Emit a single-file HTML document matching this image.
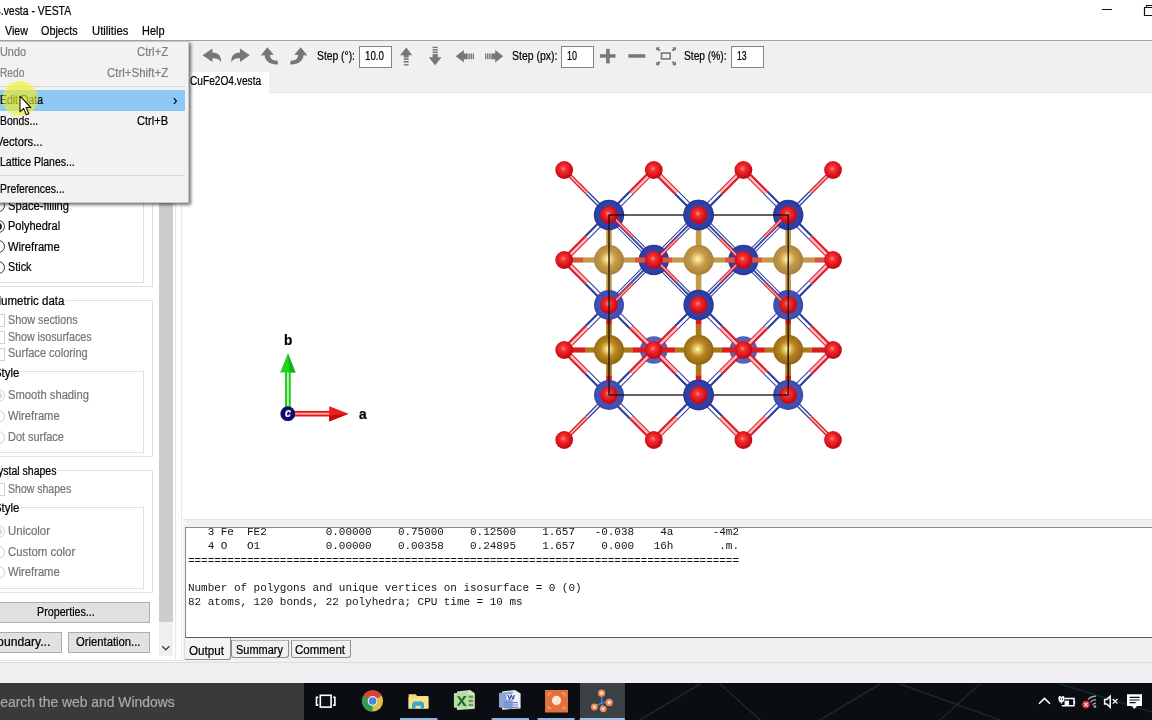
<!DOCTYPE html>
<html lang="en"><head><meta charset="utf-8"><title>CuFe2O4.vesta - VESTA</title>
<style>
html,body{margin:0;padding:0;}
body{width:1152px;height:720px;overflow:hidden;position:relative;background:#fff;font-family:"Liberation Sans",sans-serif;font-size:12px;color:#000;}
.a{position:absolute;}
.t{position:absolute;white-space:pre;line-height:1;transform-origin:0 0;-webkit-text-stroke:0.22px currentColor;}
.m{position:absolute;white-space:pre;font-family:"Liberation Mono",monospace;font-size:11px;line-height:1;color:#141414;will-change:transform;}
svg{position:absolute;overflow:visible;}
</style></head><body>
<!-- title + menu bar are white; toolbar strip -->
<div class="a" style="left:0;top:40px;width:1152px;height:1px;background:#a5a5a5;"></div>
<div class="a" style="left:0;top:41px;width:1152px;height:51.5px;background:#f0eff1;"></div>
<div class="a" style="left:0;top:92px;width:1152px;height:1px;background:#e4e4e6;"></div>
<!-- window controls -->
<div class="a" style="left:1102px;top:9px;width:10px;height:1.3px;background:#111;"></div>
<svg style="left:1142px;top:3px" width="12" height="14" viewBox="0 0 12 14"><path d="M2.5 4.5h9v8h-9z M4.5 4.5v-2h8" fill="none" stroke="#111" stroke-width="1.2"/></svg>
<!-- document tab -->
<div class="a" style="left:186px;top:72px;width:83px;height:21px;background:#fff;"></div>
<!-- toolbar inputs -->
<div class="a" style="left:359px;top:46px;width:31px;height:19.5px;background:#fff;border:1px solid #848484;"></div>
<div class="a" style="left:560.5px;top:46px;width:31px;height:19.5px;background:#fff;border:1px solid #848484;"></div>
<div class="a" style="left:730.5px;top:46px;width:31px;height:19.5px;background:#fff;border:1px solid #848484;"></div>
<!-- toolbar icons -->
<svg style="left:0;top:0" width="1152" height="100" viewBox="0 0 1152 100" fill="#777">
 <!-- rotate back/forward (reply style arrows) -->
 <path d="M202.6 55.3 L212.4 48.6 L212.4 52.6 C218.5 52.6 221.4 56.2 221 62.2 C219.6 59.2 217 58 212.4 58.2 L212.4 62 Z"/>
 <path d="M249.8 55.3 L240 48.6 L240 52.6 C233.9 52.6 231 56.2 231.4 62.2 C232.8 59.2 235.4 58 240 58.2 L240 62 Z"/>
 <!-- up-left curved, up-right curved -->
 <path d="M267.3 47.3 L260.7 55.4 L264.6 55.2 C265 60.6 269 64.6 278.3 64.4 L277.2 60.6 C272.6 60.8 270.2 58.6 270 55 L273.8 54.8 Z"/>
 <path d="M300.8 47.3 L307.4 55.4 L303.5 55.2 C303.1 60.6 299.1 64.6 289.8 64.4 L290.9 60.6 C295.5 60.8 297.9 58.6 298.1 55 L294.3 54.8 Z"/>
 <!-- up arrow with bars -->
 <path d="M406.2 47.6 L412.3 55.2 L408.6 55.2 L408.6 57.4 L403.8 57.4 L403.8 55.2 L400.1 55.2 Z"/>
 <rect x="403.8" y="58.3" width="4.8" height="1.6"/><rect x="403.8" y="61" width="4.8" height="1.6"/><rect x="403.8" y="64.1" width="4.8" height="1.4"/>
 <!-- down arrow with bars -->
 <path d="M435.1 65.2 L441.5 57.2 L437.8 57.2 L437.8 53.9 L432.6 53.9 L432.6 57.2 L428.8 57.2 Z"/>
 <rect x="432.6" y="51.6" width="5.2" height="1.5"/><rect x="432.6" y="49.1" width="5.2" height="1.5"/><rect x="432.6" y="46.7" width="5.2" height="1.4"/>
 <!-- left arrow with bars -->
 <path d="M455.8 56.2 L463.8 49.9 L463.8 53.5 L467.7 53.5 L467.7 59.2 L463.8 59.2 L463.8 62.5 Z"/>
 <rect x="468.5" y="53.5" width="1.4" height="5.7"/><rect x="470.6" y="53.5" width="1.4" height="5.7"/><rect x="472.7" y="53.5" width="1.3" height="5.7"/>
 <!-- right arrow with bars -->
 <path d="M503.2 56.2 L495.2 49.9 L495.2 53.5 L491.3 53.5 L491.3 59.2 L495.2 59.2 L495.2 62.5 Z"/>
 <rect x="489.1" y="53.5" width="1.4" height="5.7"/><rect x="487" y="53.5" width="1.4" height="5.7"/><rect x="485" y="53.5" width="1.3" height="5.7"/>
 <!-- plus / minus -->
 <rect x="600" y="54.2" width="15.5" height="3.5"/><rect x="606.1" y="48.8" width="3.6" height="14.6"/>
 <rect x="628.3" y="54.2" width="17" height="3.5"/>
 <!-- fit to window -->
 <g fill="none" stroke="#777" stroke-width="1.6">
  <rect x="661.5" y="53.1" width="8.6" height="5.8"/>
  <path d="M657.4 48.4l2.4 2.3M674.8 48.4l-2.4 2.3M657.4 64l2.4 -2.3M674.8 64l-2.4 -2.3" stroke-width="2"/>
 </g>
 <path d="M656.2 47.2h3.8l-3.8 3.6zM676 47.2h-3.8l3.8 3.6zM656.2 65.2h3.8l-3.8-3.6zM676 65.2h-3.8l3.8-3.6z"/>
</svg>
<!-- window chrome text -->
<span class="t" id="t0" style="left:-4.60px;top:4.64px;font-size:12px;color:#000;transform:scaleX(0.8666);">4.vesta - VESTA</span>
<span class="t" id="t1" style="left:4.90px;top:24.54px;font-size:12px;color:#000;transform:scaleX(0.8877);">View</span>
<span class="t" id="t2" style="left:41.30px;top:24.54px;font-size:12px;color:#000;transform:scaleX(0.9020);">Objects</span>
<span class="t" id="t3" style="left:91.70px;top:24.54px;font-size:12px;color:#000;transform:scaleX(0.9387);">Utilities</span>
<span class="t" id="t4" style="left:141.50px;top:24.54px;font-size:12px;color:#000;transform:scaleX(0.9114);">Help</span>
<span class="t" id="t5" style="left:316.80px;top:49.84px;font-size:12px;color:#000;transform:scaleX(0.8606);">Step (°):</span>
<span class="t" id="t6" style="left:365.00px;top:49.84px;font-size:12px;color:#000;transform:scaleX(0.8134);">10.0</span>
<span class="t" id="t7" style="left:511.80px;top:49.84px;font-size:12px;color:#000;transform:scaleX(0.8745);">Step (px):</span>
<span class="t" id="t8" style="left:567.00px;top:49.84px;font-size:12px;color:#000;transform:scaleX(0.7485);">10</span>
<span class="t" id="t9" style="left:684.40px;top:49.84px;font-size:12px;color:#000;transform:scaleX(0.8497);">Step (%):</span>
<span class="t" id="t10" style="left:737.30px;top:49.84px;font-size:12px;color:#000;transform:scaleX(0.7261);">13</span>
<span class="t" id="t11" style="left:189.90px;top:75.44px;font-size:12px;color:#000;transform:scaleX(0.8460);">CuFe2O4.vesta</span>
<!-- left side panel (white) with group boxes -->
<div class="a" style="left:0;top:93px;width:183px;height:568px;background:#fff;"></div>
<!-- style group (top, partially hidden) -->
<div class="a" style="left:-10px;top:150px;width:163px;height:136.5px;border:1px solid #e1e1e1;box-sizing:border-box;"></div>
<div class="a" style="left:-10px;top:160px;width:154px;height:122.5px;border:1px solid #e1e1e1;box-sizing:border-box;"></div>
<!-- volumetric data -->
<div class="a" style="left:-10px;top:300px;width:163px;height:157px;border:1px solid #e1e1e1;box-sizing:border-box;"></div>
<div class="a" style="left:-10px;top:371px;width:154px;height:81.5px;border:1px solid #e1e1e1;box-sizing:border-box;"></div>
<!-- crystal shapes -->
<div class="a" style="left:-10px;top:470px;width:163px;height:123px;border:1px solid #e1e1e1;box-sizing:border-box;"></div>
<div class="a" style="left:-10px;top:507px;width:154px;height:81.5px;border:1px solid #e1e1e1;box-sizing:border-box;"></div>
<!-- radio buttons -->
<div class="a" style="left:-8px;top:199px;width:11px;height:11px;border:1px solid #333;border-radius:50%;"></div>
<div class="a" style="left:-8px;top:219.5px;width:11px;height:11px;border:1px solid #333;border-radius:50%;"></div>
<div class="a" style="left:-5px;top:222.5px;width:7px;height:7px;background:#222;border-radius:50%;"></div>
<div class="a" style="left:-8px;top:240px;width:11px;height:11px;border:1px solid #333;border-radius:50%;"></div>
<div class="a" style="left:-8px;top:260.5px;width:11px;height:11px;border:1px solid #333;border-radius:50%;"></div>
<!-- disabled checkboxes -->
<div class="a" style="left:-8.5px;top:313.5px;width:11px;height:11px;border:1px solid #cfcfcf;"></div>
<div class="a" style="left:-8.5px;top:330.5px;width:11px;height:11px;border:1px solid #cfcfcf;"></div>
<div class="a" style="left:-8.5px;top:347.5px;width:11px;height:11px;border:1px solid #cfcfcf;"></div>
<div class="a" style="left:-8.5px;top:483px;width:11px;height:11px;border:1px solid #cfcfcf;"></div>
<!-- disabled radios -->
<div class="a" style="left:-8px;top:389px;width:11px;height:11px;border:1px solid #cfcfcf;border-radius:50%;"></div>
<div class="a" style="left:-5px;top:392px;width:7px;height:7px;background:#d4d4d4;border-radius:50%;"></div>
<div class="a" style="left:-8px;top:410px;width:11px;height:11px;border:1px solid #cfcfcf;border-radius:50%;"></div>
<div class="a" style="left:-8px;top:430.5px;width:11px;height:11px;border:1px solid #cfcfcf;border-radius:50%;"></div>
<div class="a" style="left:-8px;top:525px;width:11px;height:11px;border:1px solid #cfcfcf;border-radius:50%;"></div>
<div class="a" style="left:-5px;top:528px;width:7px;height:7px;background:#d4d4d4;border-radius:50%;"></div>
<div class="a" style="left:-8px;top:546px;width:11px;height:11px;border:1px solid #cfcfcf;border-radius:50%;"></div>
<div class="a" style="left:-8px;top:566px;width:11px;height:11px;border:1px solid #cfcfcf;border-radius:50%;"></div>
<!-- buttons -->
<div class="a" style="left:-10px;top:601.5px;width:159.5px;height:21px;background:#e1e1e1;border:1px solid #adadad;box-sizing:border-box;"></div>
<div class="a" style="left:-10px;top:631.5px;width:72px;height:21.5px;background:#e1e1e1;border:1px solid #adadad;box-sizing:border-box;"></div>
<div class="a" style="left:67.5px;top:631.5px;width:82px;height:21.5px;background:#e1e1e1;border:1px solid #adadad;box-sizing:border-box;"></div>
<!-- scrollbar -->
<div class="a" style="left:159px;top:93px;width:13.8px;height:563px;background:#f0f0f0;"></div>
<div class="a" style="left:159px;top:93px;width:13.8px;height:529px;background:#cdcccf;"></div>
<svg style="left:160px;top:642px" width="12" height="12" viewBox="0 0 12 12"><path d="M2.2 4.2L5.8 7.8L9.4 4.2" fill="none" stroke="#444" stroke-width="1.5"/></svg>
<!-- splitter lines -->
<div class="a" style="left:175px;top:93px;width:1px;height:567px;background:#e9e9e9;"></div>
<div class="a" style="left:181px;top:93px;width:1px;height:567px;background:#e9e9e9;"></div>
<div class="a" style="left:0;top:660px;width:183px;height:1px;background:#e2e2e2;"></div>
<span class="t" id="t12" style="left:8.30px;top:199.54px;font-size:12px;color:#000;transform:scaleX(0.9346);">Space-filling</span>
<span class="t" id="t13" style="left:8.30px;top:220.04px;font-size:12px;color:#000;transform:scaleX(0.9188);">Polyhedral</span>
<span class="t" id="t14" style="left:8.30px;top:240.84px;font-size:12px;color:#000;transform:scaleX(0.9342);">Wireframe</span>
<span class="t" id="t15" style="left:8.30px;top:261.14px;font-size:12px;color:#000;transform:scaleX(0.9033);">Stick</span>
<span class="t" id="t16" style="left:-15.50px;top:294.94px;font-size:12px;color:#000;transform:scaleX(0.9599);background:#fff;">Volumetric data</span>
<span class="t" id="t17" style="left:7.60px;top:313.64px;font-size:12px;color:#757575;transform:scaleX(0.9008);">Show sections</span>
<span class="t" id="t18" style="left:7.60px;top:330.64px;font-size:12px;color:#757575;transform:scaleX(0.8879);">Show isosurfaces</span>
<span class="t" id="t19" style="left:7.60px;top:347.44px;font-size:12px;color:#757575;transform:scaleX(0.9191);">Surface coloring</span>
<span class="t" id="t20" style="left:-6.00px;top:366.64px;font-size:12px;color:#000;transform:scaleX(0.9518);background:#fff;">Style</span>
<span class="t" id="t21" style="left:8.30px;top:389.14px;font-size:12px;color:#757575;transform:scaleX(0.9350);">Smooth shading</span>
<span class="t" id="t22" style="left:8.30px;top:410.04px;font-size:12px;color:#757575;transform:scaleX(0.9342);">Wireframe</span>
<span class="t" id="t23" style="left:8.30px;top:430.84px;font-size:12px;color:#757575;transform:scaleX(0.9110);">Dot surface</span>
<span class="t" id="t24" style="left:-13.00px;top:464.54px;font-size:12px;color:#000;transform:scaleX(0.8743);background:#fff;">Crystal shapes</span>
<span class="t" id="t25" style="left:7.60px;top:483.04px;font-size:12px;color:#757575;transform:scaleX(0.8772);">Show shapes</span>
<span class="t" id="t26" style="left:-6.00px;top:502.44px;font-size:12px;color:#000;transform:scaleX(0.9518);background:#fff;">Style</span>
<span class="t" id="t27" style="left:8.30px;top:525.34px;font-size:12px;color:#757575;transform:scaleX(0.9542);">Unicolor</span>
<span class="t" id="t28" style="left:8.30px;top:546.14px;font-size:12px;color:#757575;transform:scaleX(0.9507);">Custom color</span>
<span class="t" id="t29" style="left:8.30px;top:566.44px;font-size:12px;color:#757575;transform:scaleX(0.9342);">Wireframe</span>
<span class="t" id="t30" style="left:36.50px;top:605.94px;font-size:12px;color:#000;transform:scaleX(0.8933);">Properties...</span>
<span class="t" id="t31" style="left:-11.00px;top:636.44px;font-size:12px;color:#000;transform:scaleX(1.0135);">Boundary...</span>
<span class="t" id="t32" style="left:75.90px;top:636.44px;font-size:12px;color:#000;transform:scaleX(0.9374);">Orientation...</span>
<!-- 3D canvas -->
<div class="a" style="left:183px;top:93px;width:969px;height:425.5px;background:#fff;"></div>
<svg style="left:0;top:0" width="1152" height="720" viewBox="0 0 1152 720">
<defs>
<filter id="soft" x="-5%" y="-5%" width="110%" height="110%"><feGaussianBlur stdDeviation="0.45"/></filter>
<radialGradient id="gR" cx="0.45" cy="0.42" r="0.6"><stop offset="0" stop-color="#ff8c88"/><stop offset="0.25" stop-color="#f23434"/><stop offset="0.65" stop-color="#de121c"/><stop offset="1" stop-color="#b00c16"/></radialGradient>
<radialGradient id="gB" cx="0.5" cy="0.5" r="0.5"><stop offset="0" stop-color="#3448b4"/><stop offset="0.8" stop-color="#2f40a8"/><stop offset="1" stop-color="#2a3696"/></radialGradient>
<radialGradient id="gBm" cx="0.5" cy="0.5" r="0.5"><stop offset="0" stop-color="#4658bc"/><stop offset="0.8" stop-color="#4052b4"/><stop offset="1" stop-color="#3a48a4"/></radialGradient>
<radialGradient id="gBf" cx="0.5" cy="0.5" r="0.5"><stop offset="0" stop-color="#5a6cc4"/><stop offset="0.8" stop-color="#5465bd"/><stop offset="1" stop-color="#5060b4"/></radialGradient>
<radialGradient id="gG" cx="0.47" cy="0.47" r="0.58"><stop offset="0" stop-color="#fffcd8"/><stop offset="0.14" stop-color="#f4dc88"/><stop offset="0.45" stop-color="#c69c4a"/><stop offset="1" stop-color="#a07a3a"/></radialGradient>
<radialGradient id="gGd" cx="0.47" cy="0.47" r="0.58"><stop offset="0" stop-color="#fffbd0"/><stop offset="0.14" stop-color="#f2d474"/><stop offset="0.45" stop-color="#b98622"/><stop offset="1" stop-color="#8a5c10"/></radialGradient>
</defs>
<g filter="url(#soft)">
<line x1="586.6" y1="192.5" x2="609.0" y2="215.0" stroke="#2a3a9c" stroke-width="4.2"/><line x1="586.6" y1="192.5" x2="609.0" y2="215.0" stroke="#ffffff" stroke-width="1.68"/>
<line x1="586.6" y1="237.5" x2="609.0" y2="215.0" stroke="#2a3a9c" stroke-width="5.7"/><line x1="587.0" y1="237.9" x2="609.4" y2="215.4" stroke="#ffffff" stroke-width="2.6"/>
<line x1="631.4" y1="192.5" x2="609.0" y2="215.0" stroke="#2a3a9c" stroke-width="5.7"/><line x1="631.8" y1="192.9" x2="609.4" y2="215.4" stroke="#ffffff" stroke-width="2.6"/>
<line x1="607.9" y1="216.1" x2="652.7" y2="261.1" stroke="#2a3a9c" stroke-width="3.3"/><line x1="607.9" y1="216.1" x2="652.7" y2="261.1" stroke="#ffffff" stroke-width="1.32"/>
<line x1="632.5" y1="236.4" x2="654.9" y2="258.9" stroke="#2a3a9c" stroke-width="3.3"/><line x1="632.5" y1="236.4" x2="654.9" y2="258.9" stroke="#ffffff" stroke-width="1.32"/>
<line x1="676.2" y1="192.5" x2="698.6" y2="215.0" stroke="#2a3a9c" stroke-width="5.7"/><line x1="676.6" y1="192.1" x2="699.0" y2="214.6" stroke="#ffffff" stroke-width="2.6"/>
<line x1="652.7" y1="258.9" x2="697.5" y2="213.9" stroke="#2a3a9c" stroke-width="3.3"/><line x1="652.7" y1="258.9" x2="697.5" y2="213.9" stroke="#ffffff" stroke-width="1.32"/>
<line x1="677.3" y1="238.6" x2="699.7" y2="216.1" stroke="#2a3a9c" stroke-width="3.3"/><line x1="677.3" y1="238.6" x2="699.7" y2="216.1" stroke="#ffffff" stroke-width="1.32"/>
<line x1="721.0" y1="192.5" x2="698.6" y2="215.0" stroke="#2a3a9c" stroke-width="5.7"/><line x1="720.6" y1="192.1" x2="698.2" y2="214.6" stroke="#ffffff" stroke-width="2.6"/>
<line x1="744.5" y1="258.9" x2="699.7" y2="213.9" stroke="#2a3a9c" stroke-width="3.3"/><line x1="744.5" y1="258.9" x2="699.7" y2="213.9" stroke="#ffffff" stroke-width="1.32"/>
<line x1="719.9" y1="238.6" x2="697.5" y2="216.1" stroke="#2a3a9c" stroke-width="3.3"/><line x1="719.9" y1="238.6" x2="697.5" y2="216.1" stroke="#ffffff" stroke-width="1.32"/>
<line x1="765.8" y1="192.5" x2="788.2" y2="215.0" stroke="#2a3a9c" stroke-width="5.7"/><line x1="765.4" y1="192.9" x2="787.8" y2="215.4" stroke="#ffffff" stroke-width="2.6"/>
<line x1="789.3" y1="216.1" x2="744.5" y2="261.1" stroke="#2a3a9c" stroke-width="3.3"/><line x1="789.3" y1="216.1" x2="744.5" y2="261.1" stroke="#ffffff" stroke-width="1.32"/>
<line x1="764.7" y1="236.4" x2="742.3" y2="258.9" stroke="#2a3a9c" stroke-width="3.3"/><line x1="764.7" y1="236.4" x2="742.3" y2="258.9" stroke="#ffffff" stroke-width="1.32"/>
<line x1="810.6" y1="192.5" x2="788.2" y2="215.0" stroke="#2a3a9c" stroke-width="4.2"/><line x1="810.6" y1="192.5" x2="788.2" y2="215.0" stroke="#ffffff" stroke-width="1.68"/>
<line x1="810.6" y1="237.5" x2="788.2" y2="215.0" stroke="#2a3a9c" stroke-width="5.7"/><line x1="810.2" y1="237.9" x2="787.8" y2="215.4" stroke="#ffffff" stroke-width="2.6"/>
<line x1="607.9" y1="303.9" x2="652.7" y2="258.9" stroke="#2a3a9c" stroke-width="3.3"/><line x1="607.9" y1="303.9" x2="652.7" y2="258.9" stroke="#ffffff" stroke-width="1.32"/>
<line x1="632.5" y1="283.6" x2="654.9" y2="261.1" stroke="#2a3a9c" stroke-width="3.3"/><line x1="632.5" y1="283.6" x2="654.9" y2="261.1" stroke="#ffffff" stroke-width="1.32"/>
<line x1="652.7" y1="261.1" x2="697.5" y2="306.1" stroke="#2a3a9c" stroke-width="3.3"/><line x1="652.7" y1="261.1" x2="697.5" y2="306.1" stroke="#ffffff" stroke-width="1.32"/>
<line x1="677.3" y1="281.4" x2="699.7" y2="303.9" stroke="#2a3a9c" stroke-width="3.3"/><line x1="677.3" y1="281.4" x2="699.7" y2="303.9" stroke="#ffffff" stroke-width="1.32"/>
<line x1="744.5" y1="261.1" x2="699.7" y2="306.1" stroke="#2a3a9c" stroke-width="3.3"/><line x1="744.5" y1="261.1" x2="699.7" y2="306.1" stroke="#ffffff" stroke-width="1.32"/>
<line x1="719.9" y1="281.4" x2="697.5" y2="303.9" stroke="#2a3a9c" stroke-width="3.3"/><line x1="719.9" y1="281.4" x2="697.5" y2="303.9" stroke="#ffffff" stroke-width="1.32"/>
<line x1="789.3" y1="303.9" x2="744.5" y2="258.9" stroke="#2a3a9c" stroke-width="3.3"/><line x1="789.3" y1="303.9" x2="744.5" y2="258.9" stroke="#ffffff" stroke-width="1.32"/>
<line x1="764.7" y1="283.6" x2="742.3" y2="261.1" stroke="#2a3a9c" stroke-width="3.3"/><line x1="764.7" y1="283.6" x2="742.3" y2="261.1" stroke="#ffffff" stroke-width="1.32"/>
<line x1="586.6" y1="282.5" x2="609.0" y2="305.0" stroke="#2a3a9c" stroke-width="5.7"/><line x1="587.0" y1="282.1" x2="609.4" y2="304.6" stroke="#ffffff" stroke-width="2.6"/>
<line x1="586.6" y1="327.5" x2="609.0" y2="305.0" stroke="#2a3a9c" stroke-width="5.7"/><line x1="587.0" y1="327.9" x2="609.4" y2="305.4" stroke="#ffffff" stroke-width="2.6"/>
<line x1="631.4" y1="327.5" x2="609.0" y2="305.0" stroke="#2a3a9c" stroke-width="5.7"/><line x1="631.8" y1="327.1" x2="609.4" y2="304.6" stroke="#ffffff" stroke-width="2.6"/>
<line x1="676.2" y1="327.5" x2="698.6" y2="305.0" stroke="#2a3a9c" stroke-width="5.7"/><line x1="676.6" y1="327.9" x2="699.0" y2="305.4" stroke="#ffffff" stroke-width="2.6"/>
<line x1="721.0" y1="327.5" x2="698.6" y2="305.0" stroke="#2a3a9c" stroke-width="5.7"/><line x1="720.6" y1="327.9" x2="698.2" y2="305.4" stroke="#ffffff" stroke-width="2.6"/>
<line x1="765.8" y1="327.5" x2="788.2" y2="305.0" stroke="#2a3a9c" stroke-width="5.7"/><line x1="765.4" y1="327.1" x2="787.8" y2="304.6" stroke="#ffffff" stroke-width="2.6"/>
<line x1="810.6" y1="282.5" x2="788.2" y2="305.0" stroke="#2a3a9c" stroke-width="5.7"/><line x1="810.2" y1="282.1" x2="787.8" y2="304.6" stroke="#ffffff" stroke-width="2.6"/>
<line x1="810.6" y1="327.5" x2="788.2" y2="305.0" stroke="#2a3a9c" stroke-width="5.7"/><line x1="810.2" y1="327.9" x2="787.8" y2="305.4" stroke="#ffffff" stroke-width="2.6"/>
<line x1="631.4" y1="372.5" x2="609.0" y2="395.0" stroke="#2a3a9c" stroke-width="5.7"/><line x1="631.8" y1="372.9" x2="609.4" y2="395.4" stroke="#ffffff" stroke-width="2.6"/>
<line x1="676.2" y1="372.5" x2="698.6" y2="395.0" stroke="#2a3a9c" stroke-width="5.7"/><line x1="676.6" y1="372.1" x2="699.0" y2="394.6" stroke="#ffffff" stroke-width="2.6"/>
<line x1="721.0" y1="372.5" x2="698.6" y2="395.0" stroke="#2a3a9c" stroke-width="5.7"/><line x1="720.6" y1="372.1" x2="698.2" y2="394.6" stroke="#ffffff" stroke-width="2.6"/>
<line x1="765.8" y1="372.5" x2="788.2" y2="395.0" stroke="#2a3a9c" stroke-width="5.7"/><line x1="765.4" y1="372.9" x2="787.8" y2="395.4" stroke="#ffffff" stroke-width="2.6"/>
<line x1="586.6" y1="372.5" x2="609.0" y2="395.0" stroke="#2a3a9c" stroke-width="5.7"/><line x1="587.0" y1="372.1" x2="609.4" y2="394.6" stroke="#ffffff" stroke-width="2.6"/>
<line x1="586.6" y1="417.5" x2="609.0" y2="395.0" stroke="#2a3a9c" stroke-width="4.2"/><line x1="586.6" y1="417.5" x2="609.0" y2="395.0" stroke="#ffffff" stroke-width="1.68"/>
<line x1="631.4" y1="417.5" x2="609.0" y2="395.0" stroke="#2a3a9c" stroke-width="5.7"/><line x1="631.8" y1="417.1" x2="609.4" y2="394.6" stroke="#ffffff" stroke-width="2.6"/>
<line x1="676.2" y1="417.5" x2="698.6" y2="395.0" stroke="#2a3a9c" stroke-width="5.7"/><line x1="676.6" y1="417.9" x2="699.0" y2="395.4" stroke="#ffffff" stroke-width="2.6"/>
<line x1="721.0" y1="417.5" x2="698.6" y2="395.0" stroke="#2a3a9c" stroke-width="5.7"/><line x1="720.6" y1="417.9" x2="698.2" y2="395.4" stroke="#ffffff" stroke-width="2.6"/>
<line x1="765.8" y1="417.5" x2="788.2" y2="395.0" stroke="#2a3a9c" stroke-width="5.7"/><line x1="765.4" y1="417.1" x2="787.8" y2="394.6" stroke="#ffffff" stroke-width="2.6"/>
<line x1="810.6" y1="372.5" x2="788.2" y2="395.0" stroke="#2a3a9c" stroke-width="5.7"/><line x1="810.2" y1="372.1" x2="787.8" y2="394.6" stroke="#ffffff" stroke-width="2.6"/>
<line x1="810.6" y1="417.5" x2="788.2" y2="395.0" stroke="#2a3a9c" stroke-width="4.2"/><line x1="810.6" y1="417.5" x2="788.2" y2="395.0" stroke="#ffffff" stroke-width="1.68"/>
<line x1="609.0" y1="260.0" x2="609.0" y2="219.5" stroke="#c49a48" stroke-width="5.6"/>
<line x1="609.0" y1="219.5" x2="609.0" y2="215.0" stroke="#d8583c" stroke-width="5.6"/>
<line x1="609.0" y1="260.0" x2="609.0" y2="300.5" stroke="#c49a48" stroke-width="5.6"/>
<line x1="609.0" y1="300.5" x2="609.0" y2="305.0" stroke="#d8583c" stroke-width="5.6"/>
<line x1="698.6" y1="260.0" x2="698.6" y2="219.5" stroke="#c49a48" stroke-width="5.6"/>
<line x1="698.6" y1="219.5" x2="698.6" y2="215.0" stroke="#d8583c" stroke-width="5.6"/>
<line x1="698.6" y1="260.0" x2="698.6" y2="300.5" stroke="#c49a48" stroke-width="5.6"/>
<line x1="698.6" y1="300.5" x2="698.6" y2="305.0" stroke="#d8583c" stroke-width="5.6"/>
<line x1="788.2" y1="260.0" x2="788.2" y2="219.5" stroke="#c49a48" stroke-width="5.6"/>
<line x1="788.2" y1="219.5" x2="788.2" y2="215.0" stroke="#d8583c" stroke-width="5.6"/>
<line x1="788.2" y1="260.0" x2="788.2" y2="300.5" stroke="#c49a48" stroke-width="5.6"/>
<line x1="788.2" y1="300.5" x2="788.2" y2="305.0" stroke="#d8583c" stroke-width="5.6"/>
<line x1="609.0" y1="350.0" x2="609.0" y2="324.8" stroke="#ae7818" stroke-width="5.6"/>
<line x1="609.0" y1="324.8" x2="609.0" y2="305.0" stroke="#dc1c1c" stroke-width="5.6"/>
<line x1="609.0" y1="350.0" x2="609.0" y2="375.2" stroke="#ae7818" stroke-width="5.6"/>
<line x1="609.0" y1="375.2" x2="609.0" y2="395.0" stroke="#dc1c1c" stroke-width="5.6"/>
<line x1="698.6" y1="350.0" x2="698.6" y2="324.8" stroke="#ae7818" stroke-width="5.6"/>
<line x1="698.6" y1="324.8" x2="698.6" y2="305.0" stroke="#dc1c1c" stroke-width="5.6"/>
<line x1="698.6" y1="350.0" x2="698.6" y2="375.2" stroke="#ae7818" stroke-width="5.6"/>
<line x1="698.6" y1="375.2" x2="698.6" y2="395.0" stroke="#dc1c1c" stroke-width="5.6"/>
<line x1="788.2" y1="350.0" x2="788.2" y2="324.8" stroke="#ae7818" stroke-width="5.6"/>
<line x1="788.2" y1="324.8" x2="788.2" y2="305.0" stroke="#dc1c1c" stroke-width="5.6"/>
<line x1="788.2" y1="350.0" x2="788.2" y2="375.2" stroke="#ae7818" stroke-width="5.6"/>
<line x1="788.2" y1="375.2" x2="788.2" y2="395.0" stroke="#dc1c1c" stroke-width="5.6"/>
<circle cx="609.0" cy="215.0" r="15.2" fill="url(#gB)"/>
<circle cx="698.6" cy="215.0" r="15.2" fill="url(#gB)"/>
<circle cx="788.2" cy="215.0" r="15.2" fill="url(#gB)"/>
<circle cx="653.8" cy="260.0" r="15.2" fill="url(#gB)"/>
<circle cx="743.4" cy="260.0" r="15.2" fill="url(#gB)"/>
<circle cx="609.0" cy="305.0" r="15" fill="url(#gBm)"/>
<circle cx="698.6" cy="305.0" r="15.2" fill="url(#gB)"/>
<circle cx="788.2" cy="305.0" r="15" fill="url(#gBm)"/>
<circle cx="653.8" cy="350.0" r="13.8" fill="url(#gBf)"/>
<circle cx="743.4" cy="350.0" r="13.8" fill="url(#gBf)"/>
<circle cx="609.0" cy="395.0" r="15" fill="url(#gBm)"/>
<circle cx="698.6" cy="395.0" r="15.2" fill="url(#gB)"/>
<circle cx="788.2" cy="395.0" r="15" fill="url(#gBm)"/>
<line x1="564.2" y1="170.0" x2="586.6" y2="192.5" stroke="#d81c2a" stroke-width="4.2"/><line x1="564.2" y1="170.0" x2="586.6" y2="192.5" stroke="#ffbcbc" stroke-width="1.68"/>
<line x1="564.2" y1="260.0" x2="586.6" y2="237.5" stroke="#d81c2a" stroke-width="5.7"/><line x1="564.6" y1="260.4" x2="587.0" y2="237.9" stroke="#ffbcbc" stroke-width="2.6"/>
<line x1="653.8" y1="170.0" x2="631.4" y2="192.5" stroke="#d81c2a" stroke-width="5.7"/><line x1="654.2" y1="170.4" x2="631.8" y2="192.9" stroke="#ffbcbc" stroke-width="2.6"/>
<line x1="610.1" y1="213.9" x2="632.5" y2="236.4" stroke="#d81c2a" stroke-width="3.3"/><line x1="610.1" y1="213.9" x2="632.5" y2="236.4" stroke="#ffbcbc" stroke-width="1.32"/>
<line x1="653.8" y1="170.0" x2="676.2" y2="192.5" stroke="#d81c2a" stroke-width="5.7"/><line x1="654.2" y1="169.6" x2="676.6" y2="192.1" stroke="#ffbcbc" stroke-width="2.6"/>
<line x1="654.9" y1="261.1" x2="677.3" y2="238.6" stroke="#d81c2a" stroke-width="3.3"/><line x1="654.9" y1="261.1" x2="677.3" y2="238.6" stroke="#ffbcbc" stroke-width="1.32"/>
<line x1="743.4" y1="170.0" x2="721.0" y2="192.5" stroke="#d81c2a" stroke-width="5.7"/><line x1="743.0" y1="169.6" x2="720.6" y2="192.1" stroke="#ffbcbc" stroke-width="2.6"/>
<line x1="742.3" y1="261.1" x2="719.9" y2="238.6" stroke="#d81c2a" stroke-width="3.3"/><line x1="742.3" y1="261.1" x2="719.9" y2="238.6" stroke="#ffbcbc" stroke-width="1.32"/>
<line x1="743.4" y1="170.0" x2="765.8" y2="192.5" stroke="#d81c2a" stroke-width="5.7"/><line x1="743.0" y1="170.4" x2="765.4" y2="192.9" stroke="#ffbcbc" stroke-width="2.6"/>
<line x1="787.1" y1="213.9" x2="764.7" y2="236.4" stroke="#d81c2a" stroke-width="3.3"/><line x1="787.1" y1="213.9" x2="764.7" y2="236.4" stroke="#ffbcbc" stroke-width="1.32"/>
<line x1="833.0" y1="170.0" x2="810.6" y2="192.5" stroke="#d81c2a" stroke-width="4.2"/><line x1="833.0" y1="170.0" x2="810.6" y2="192.5" stroke="#ffbcbc" stroke-width="1.68"/>
<line x1="833.0" y1="260.0" x2="810.6" y2="237.5" stroke="#d81c2a" stroke-width="5.7"/><line x1="832.6" y1="260.4" x2="810.2" y2="237.9" stroke="#ffbcbc" stroke-width="2.6"/>
<line x1="610.1" y1="306.1" x2="632.5" y2="283.6" stroke="#d81c2a" stroke-width="3.3"/><line x1="610.1" y1="306.1" x2="632.5" y2="283.6" stroke="#ffbcbc" stroke-width="1.32"/>
<line x1="654.9" y1="258.9" x2="677.3" y2="281.4" stroke="#d81c2a" stroke-width="3.3"/><line x1="654.9" y1="258.9" x2="677.3" y2="281.4" stroke="#ffbcbc" stroke-width="1.32"/>
<line x1="742.3" y1="258.9" x2="719.9" y2="281.4" stroke="#d81c2a" stroke-width="3.3"/><line x1="742.3" y1="258.9" x2="719.9" y2="281.4" stroke="#ffbcbc" stroke-width="1.32"/>
<line x1="787.1" y1="306.1" x2="764.7" y2="283.6" stroke="#d81c2a" stroke-width="3.3"/><line x1="787.1" y1="306.1" x2="764.7" y2="283.6" stroke="#ffbcbc" stroke-width="1.32"/>
<line x1="564.2" y1="260.0" x2="586.6" y2="282.5" stroke="#d81c2a" stroke-width="5.7"/><line x1="564.6" y1="259.6" x2="587.0" y2="282.1" stroke="#ffbcbc" stroke-width="2.6"/>
<line x1="564.2" y1="350.0" x2="586.6" y2="327.5" stroke="#d81c2a" stroke-width="5.7"/><line x1="564.6" y1="350.4" x2="587.0" y2="327.9" stroke="#ffbcbc" stroke-width="2.6"/>
<line x1="653.8" y1="350.0" x2="631.4" y2="327.5" stroke="#d81c2a" stroke-width="5.7"/><line x1="654.2" y1="349.6" x2="631.8" y2="327.1" stroke="#ffbcbc" stroke-width="2.6"/>
<line x1="653.8" y1="350.0" x2="676.2" y2="327.5" stroke="#d81c2a" stroke-width="5.7"/><line x1="654.2" y1="350.4" x2="676.6" y2="327.9" stroke="#ffbcbc" stroke-width="2.6"/>
<line x1="743.4" y1="350.0" x2="721.0" y2="327.5" stroke="#d81c2a" stroke-width="5.7"/><line x1="743.0" y1="350.4" x2="720.6" y2="327.9" stroke="#ffbcbc" stroke-width="2.6"/>
<line x1="743.4" y1="350.0" x2="765.8" y2="327.5" stroke="#d81c2a" stroke-width="5.7"/><line x1="743.0" y1="349.6" x2="765.4" y2="327.1" stroke="#ffbcbc" stroke-width="2.6"/>
<line x1="833.0" y1="260.0" x2="810.6" y2="282.5" stroke="#d81c2a" stroke-width="5.7"/><line x1="832.6" y1="259.6" x2="810.2" y2="282.1" stroke="#ffbcbc" stroke-width="2.6"/>
<line x1="833.0" y1="350.0" x2="810.6" y2="327.5" stroke="#d81c2a" stroke-width="5.7"/><line x1="832.6" y1="350.4" x2="810.2" y2="327.9" stroke="#ffbcbc" stroke-width="2.6"/>
<line x1="653.8" y1="350.0" x2="631.4" y2="372.5" stroke="#d81c2a" stroke-width="5.7"/><line x1="654.2" y1="350.4" x2="631.8" y2="372.9" stroke="#ffbcbc" stroke-width="2.6"/>
<line x1="653.8" y1="350.0" x2="676.2" y2="372.5" stroke="#d81c2a" stroke-width="5.7"/><line x1="654.2" y1="349.6" x2="676.6" y2="372.1" stroke="#ffbcbc" stroke-width="2.6"/>
<line x1="743.4" y1="350.0" x2="721.0" y2="372.5" stroke="#d81c2a" stroke-width="5.7"/><line x1="743.0" y1="349.6" x2="720.6" y2="372.1" stroke="#ffbcbc" stroke-width="2.6"/>
<line x1="743.4" y1="350.0" x2="765.8" y2="372.5" stroke="#d81c2a" stroke-width="5.7"/><line x1="743.0" y1="350.4" x2="765.4" y2="372.9" stroke="#ffbcbc" stroke-width="2.6"/>
<line x1="564.2" y1="350.0" x2="586.6" y2="372.5" stroke="#d81c2a" stroke-width="5.7"/><line x1="564.6" y1="349.6" x2="587.0" y2="372.1" stroke="#ffbcbc" stroke-width="2.6"/>
<line x1="564.2" y1="440.0" x2="586.6" y2="417.5" stroke="#d81c2a" stroke-width="4.2"/><line x1="564.2" y1="440.0" x2="586.6" y2="417.5" stroke="#ffbcbc" stroke-width="1.68"/>
<line x1="653.8" y1="440.0" x2="631.4" y2="417.5" stroke="#d81c2a" stroke-width="5.7"/><line x1="654.2" y1="439.6" x2="631.8" y2="417.1" stroke="#ffbcbc" stroke-width="2.6"/>
<line x1="653.8" y1="440.0" x2="676.2" y2="417.5" stroke="#d81c2a" stroke-width="5.7"/><line x1="654.2" y1="440.4" x2="676.6" y2="417.9" stroke="#ffbcbc" stroke-width="2.6"/>
<line x1="743.4" y1="440.0" x2="721.0" y2="417.5" stroke="#d81c2a" stroke-width="5.7"/><line x1="743.0" y1="440.4" x2="720.6" y2="417.9" stroke="#ffbcbc" stroke-width="2.6"/>
<line x1="743.4" y1="440.0" x2="765.8" y2="417.5" stroke="#d81c2a" stroke-width="5.7"/><line x1="743.0" y1="439.6" x2="765.4" y2="417.1" stroke="#ffbcbc" stroke-width="2.6"/>
<line x1="833.0" y1="350.0" x2="810.6" y2="372.5" stroke="#d81c2a" stroke-width="5.7"/><line x1="832.6" y1="349.6" x2="810.2" y2="372.1" stroke="#ffbcbc" stroke-width="2.6"/>
<line x1="833.0" y1="440.0" x2="810.6" y2="417.5" stroke="#d81c2a" stroke-width="4.2"/><line x1="833.0" y1="440.0" x2="810.6" y2="417.5" stroke="#ffbcbc" stroke-width="1.68"/>
<line x1="609.0" y1="260.0" x2="583.0" y2="260.0" stroke="#c49a48" stroke-width="5.2"/>
<line x1="583.0" y1="260.0" x2="564.2" y2="260.0" stroke="#d8583c" stroke-width="5.2"/>
<line x1="609.0" y1="260.0" x2="635.0" y2="260.0" stroke="#c49a48" stroke-width="5.2"/>
<line x1="635.0" y1="260.0" x2="653.8" y2="260.0" stroke="#d8583c" stroke-width="5.2"/>
<line x1="698.6" y1="260.0" x2="672.6" y2="260.0" stroke="#c49a48" stroke-width="5.2"/>
<line x1="672.6" y1="260.0" x2="653.8" y2="260.0" stroke="#d8583c" stroke-width="5.2"/>
<line x1="698.6" y1="260.0" x2="724.6" y2="260.0" stroke="#c49a48" stroke-width="5.2"/>
<line x1="724.6" y1="260.0" x2="743.4" y2="260.0" stroke="#d8583c" stroke-width="5.2"/>
<line x1="788.2" y1="260.0" x2="762.2" y2="260.0" stroke="#c49a48" stroke-width="5.2"/>
<line x1="762.2" y1="260.0" x2="743.4" y2="260.0" stroke="#d8583c" stroke-width="5.2"/>
<line x1="788.2" y1="260.0" x2="814.2" y2="260.0" stroke="#c49a48" stroke-width="5.2"/>
<line x1="814.2" y1="260.0" x2="833.0" y2="260.0" stroke="#d8583c" stroke-width="5.2"/>
<line x1="609.0" y1="350.0" x2="585.7" y2="350.0" stroke="#ae7818" stroke-width="5.2"/>
<line x1="585.7" y1="350.0" x2="564.2" y2="350.0" stroke="#dc1c1c" stroke-width="5.2"/>
<line x1="609.0" y1="350.0" x2="632.3" y2="350.0" stroke="#ae7818" stroke-width="5.2"/>
<line x1="632.3" y1="350.0" x2="653.8" y2="350.0" stroke="#dc1c1c" stroke-width="5.2"/>
<line x1="698.6" y1="350.0" x2="675.3" y2="350.0" stroke="#ae7818" stroke-width="5.2"/>
<line x1="675.3" y1="350.0" x2="653.8" y2="350.0" stroke="#dc1c1c" stroke-width="5.2"/>
<line x1="698.6" y1="350.0" x2="721.9" y2="350.0" stroke="#ae7818" stroke-width="5.2"/>
<line x1="721.9" y1="350.0" x2="743.4" y2="350.0" stroke="#dc1c1c" stroke-width="5.2"/>
<line x1="788.2" y1="350.0" x2="764.9" y2="350.0" stroke="#ae7818" stroke-width="5.2"/>
<line x1="764.9" y1="350.0" x2="743.4" y2="350.0" stroke="#dc1c1c" stroke-width="5.2"/>
<line x1="788.2" y1="350.0" x2="811.5" y2="350.0" stroke="#ae7818" stroke-width="5.2"/>
<line x1="811.5" y1="350.0" x2="833.0" y2="350.0" stroke="#dc1c1c" stroke-width="5.2"/>
<circle cx="609.0" cy="260.0" r="15" fill="url(#gG)"/>
<circle cx="698.6" cy="260.0" r="15" fill="url(#gG)"/>
<circle cx="788.2" cy="260.0" r="15" fill="url(#gG)"/>
<circle cx="609.0" cy="350.0" r="15" fill="url(#gGd)"/>
<circle cx="698.6" cy="350.0" r="15" fill="url(#gGd)"/>
<circle cx="788.2" cy="350.0" r="15" fill="url(#gGd)"/>
<circle cx="609.0" cy="215.0" r="8.9" fill="url(#gR)"/>
<circle cx="698.6" cy="215.0" r="8.9" fill="url(#gR)"/>
<circle cx="788.2" cy="215.0" r="8.9" fill="url(#gR)"/>
<circle cx="653.8" cy="260.0" r="8.9" fill="url(#gR)"/>
<circle cx="743.4" cy="260.0" r="8.9" fill="url(#gR)"/>
<circle cx="609.0" cy="305.0" r="8.9" fill="url(#gR)"/>
<circle cx="698.6" cy="305.0" r="8.9" fill="url(#gR)"/>
<circle cx="788.2" cy="305.0" r="8.9" fill="url(#gR)"/>
<circle cx="653.8" cy="350.0" r="8.9" fill="url(#gR)"/>
<circle cx="743.4" cy="350.0" r="8.9" fill="url(#gR)"/>
<circle cx="609.0" cy="395.0" r="8.9" fill="url(#gR)"/>
<circle cx="698.6" cy="395.0" r="8.9" fill="url(#gR)"/>
<circle cx="788.2" cy="395.0" r="8.9" fill="url(#gR)"/>
<circle cx="564.2" cy="170.0" r="8.9" fill="url(#gR)"/>
<circle cx="653.8" cy="170.0" r="8.9" fill="url(#gR)"/>
<circle cx="743.4" cy="170.0" r="8.9" fill="url(#gR)"/>
<circle cx="833.0" cy="170.0" r="8.9" fill="url(#gR)"/>
<circle cx="564.2" cy="260.0" r="8.9" fill="url(#gR)"/>
<circle cx="833.0" cy="260.0" r="8.9" fill="url(#gR)"/>
<circle cx="564.2" cy="350.0" r="8.9" fill="url(#gR)"/>
<circle cx="833.0" cy="350.0" r="8.9" fill="url(#gR)"/>
<circle cx="564.2" cy="440.0" r="8.9" fill="url(#gR)"/>
<circle cx="653.8" cy="440.0" r="8.9" fill="url(#gR)"/>
<circle cx="743.4" cy="440.0" r="8.9" fill="url(#gR)"/>
<circle cx="833.0" cy="440.0" r="8.9" fill="url(#gR)"/>
<rect x="609.0" y="215.0" width="179.2" height="180.0" fill="none" stroke="#1a120e" stroke-width="1.35"/>
<circle cx="698.6" cy="215.0" r="15.2" fill="url(#gB)"/>
<circle cx="698.6" cy="215.0" r="8.9" fill="url(#gR)"/>
<circle cx="698.6" cy="395.0" r="15.2" fill="url(#gB)"/>
<circle cx="698.6" cy="395.0" r="8.9" fill="url(#gR)"/>
<g>
<rect x="285" y="371" width="5.8" height="37" fill="#22d020"/><rect x="287" y="371" width="1.8" height="37" fill="#b8f8b0"/>
<path d="M287.9 353.3 L295.6 372.6 L280.2 372.6 Z" fill="#22d422"/><path d="M287.9 353.3 L295.6 372.6 L289.6 372.6 Z" fill="#18b418"/>
<rect x="293" y="410.9" width="37.5" height="5.6" fill="#e81818"/><rect x="293" y="412.8" width="37.5" height="1.8" fill="#ffb0b0"/>
<path d="M348.6 413.8 L329.2 406.2 L329.2 421.4 Z" fill="#ee1c1c"/><path d="M348.6 413.8 L329.2 415.6 L329.2 421.4 Z" fill="#c41010"/>
<circle cx="287.8" cy="413.7" r="7.4" fill="#101070"/>
</g>
</g></svg>
<span class="t" id="t48" style="left:284.20px;top:331.50px;font-size:15px;color:#000;transform:scaleX(0.9049);font-weight:bold;">b</span>
<span class="t" id="t49" style="left:358.80px;top:405.50px;font-size:15px;color:#000;transform:scaleX(0.9228);font-weight:bold;">a</span>
<span class="t" id="t50" style="left:284.60px;top:407.44px;font-size:12px;color:#fff;transform:scaleX(0.8972);font-weight:bold;font-style:italic;">c</span>
<!-- area between canvas and output -->
<div class="a" style="left:183px;top:518.5px;width:969px;height:164px;background:#f0eff1;"></div>
<div class="a" style="left:183px;top:518.5px;width:969px;height:1px;background:#e2e2e2;"></div>
<div class="a" style="left:183px;top:520.6px;width:969px;height:3.4px;background:#fbfbfb;"></div>
<!-- output text box -->
<div class="a" style="left:185px;top:527px;width:980px;height:110.5px;background:#fff;border:1px solid #8a8a8a;border-bottom:1.6px solid #5c5c5c;box-sizing:border-box;overflow:hidden;"></div>
<span class="m" id="m0" style="left:188px;top:527.00px;letter-spacing:-0.0420px">   3 Fe  FE2         0.00000    0.75000    0.12500    1.657   -0.038    4a      -4m2</span>
<span class="m" id="m1" style="left:188px;top:541.00px;letter-spacing:-0.0420px">   4 O   O1          0.00000    0.00358    0.24895    1.657    0.000   16h       .m.</span>
<span class="m" id="m2" style="left:188px;top:556.00px;letter-spacing:-0.0420px">====================================================================================</span>
<span class="m" id="m3" style="left:188px;top:583.00px;letter-spacing:-0.0420px">Number of polygons and unique vertices on isosurface = 0 (0)</span>
<span class="m" id="m4" style="left:188px;top:597.00px;letter-spacing:-0.0420px">82 atoms, 120 bonds, 22 polyhedra; CPU time = 10 ms</span>
<!-- clip top of first mono line -->
<div class="a" style="left:186px;top:520px;width:966px;height:7px;background:#f0eff1;"></div>
<div class="a" style="left:185px;top:527px;width:967px;height:1px;background:#8a8a8a;"></div>
<!-- bottom tabs -->
<div class="a" style="left:231px;top:639.5px;width:57.5px;height:18.5px;background:#f0eff1;border:1px solid #8c8c8c;border-top-color:#b4b4b4;border-radius:0 0 3px 3px;box-sizing:border-box;"></div>
<div class="a" style="left:290.5px;top:639.5px;width:60px;height:18.5px;background:#f0eff1;border:1px solid #8c8c8c;border-top-color:#b4b4b4;border-radius:0 0 3px 3px;box-sizing:border-box;"></div>
<div class="a" style="left:184px;top:637.5px;width:47px;height:22.5px;background:#f4f4f5;border:1px solid #8c8c8c;border-top:none;border-left-color:#e0e0e0;border-radius:0 0 3px 3px;box-sizing:border-box;"></div>
<div class="a" style="left:0;top:661.5px;width:1152px;height:1px;background:#dcdcdc;"></div>
<div class="a" style="left:0;top:662.5px;width:1152px;height:20px;background:#f0eff1;"></div>
<span class="t" id="t44" style="left:189.40px;top:645.44px;font-size:12px;color:#000;transform:scaleX(0.9686);">Output</span>
<span class="t" id="t45" style="left:236.30px;top:643.74px;font-size:12px;color:#000;transform:scaleX(0.9135);">Summary</span>
<span class="t" id="t46" style="left:295.30px;top:643.74px;font-size:12px;color:#000;transform:scaleX(0.9612);">Comment</span>
<!-- Edit dropdown menu -->
<div class="a" style="left:-10px;top:40.5px;width:198.6px;height:162px;background:#f2f2f2;border:1px solid #c8c8c8;box-sizing:border-box;box-shadow:2px 2px 3px rgba(0,0,0,0.55);"></div>
<div class="a" style="left:0;top:86px;width:185px;height:1px;background:#d7d7d7;"></div>
<div class="a" style="left:0;top:175px;width:185px;height:1px;background:#d7d7d7;"></div>
<div class="a" style="left:0;top:90px;width:185px;height:20.5px;background:#8fc7f5;"></div>
<span class="t" id="t33" style="left:-0.50px;top:46.14px;font-size:12px;color:#808080;transform:scaleX(0.9063);">Undo</span>
<span class="t" id="t34" style="left:136.80px;top:46.14px;font-size:12px;color:#808080;transform:scaleX(0.9455);">Ctrl+Z</span>
<span class="t" id="t35" style="left:-0.50px;top:67.04px;font-size:12px;color:#808080;transform:scaleX(0.8471);">Redo</span>
<span class="t" id="t36" style="left:106.80px;top:67.04px;font-size:12px;color:#808080;transform:scaleX(0.9558);">Ctrl+Shift+Z</span>
<span class="t" id="t37" style="left:-0.50px;top:94.44px;font-size:12px;color:#000;transform:scaleX(0.8712);">Edit Data</span>
<span class="t" id="t38" style="left:172.50px;top:93.15px;font-size:14px;color:#000;transform:scaleX(0.9632);">›</span>
<span class="t" id="t39" style="left:-0.50px;top:114.94px;font-size:12px;color:#000;transform:scaleX(0.8676);">Bonds...</span>
<span class="t" id="t40" style="left:136.80px;top:114.94px;font-size:12px;color:#000;transform:scaleX(0.9262);">Ctrl+B</span>
<span class="t" id="t41" style="left:-4.00px;top:135.74px;font-size:12px;color:#000;transform:scaleX(0.9294);">Vectors...</span>
<span class="t" id="t42" style="left:-0.50px;top:156.24px;font-size:12px;color:#000;transform:scaleX(0.8760);">Lattice Planes...</span>
<span class="t" id="t43" style="left:-0.50px;top:182.64px;font-size:12px;color:#000;transform:scaleX(0.8661);">Preferences...</span>
<!-- taskbar -->
<div class="a" style="left:0;top:682.5px;width:1152px;height:38px;background:#0a0d12;"></div>
<div class="a" style="left:0;top:682.5px;width:303.5px;height:38px;background:#3a3a3a;"></div>
<div class="a" style="left:579.8px;top:682.5px;width:45px;height:38px;background:#3b4045;"></div>
<svg style="left:0;top:682px" width="1152" height="38" viewBox="0 682 1152 38">
 <!-- faint wallpaper streaks -->
 <g stroke="#1d3038" stroke-width="1.5" opacity="0.8" fill="none">
  <path d="M640 720L700 684M760 720L720 684M820 720L880 684M900 684L1000 720M1060 684L1152 712M980 684L940 720"/>
 </g>
 <!-- running underlines -->
 <rect x="400" y="718" width="37.5" height="2" fill="#8fb6e0"/>
 <rect x="491.7" y="718" width="37.3" height="2" fill="#8fb6e0"/>
 <rect x="537.6" y="718" width="37" height="2" fill="#8fb6e0"/>
 <rect x="579.8" y="718" width="45" height="2" fill="#9cc0e6"/>
 <!-- task view -->
 <g fill="none" stroke="#fff" stroke-width="1.6">
  <rect x="320.3" y="695.3" width="10.8" height="11.8"/>
  <path d="M318.3 697.3h-1.8v7.8h1.8M333.1 697.3h1.8v7.8h-1.8"/>
 </g>
 <!-- chrome -->
 <g>
  <circle cx="372.6" cy="701" r="10.5" fill="#e0c040"/>
  <path d="M372.6 701 L363.5 695.75 A10.5 10.5 0 0 1 381.7 695.75 Z" fill="#d84436"/>
  <path d="M372.6 701 L363.5 695.75 A10.5 10.5 0 0 0 372.6 711.5 Z" fill="#2f9e50"/>
  <path d="M363.5 695.75 A10.5 10.5 0 0 1 381.7 695.75 L372.6 695.75Z" fill="#d84436"/>
  <circle cx="372.6" cy="701" r="4.9" fill="#f0f0f0"/>
  <circle cx="372.6" cy="701" r="3.8" fill="#4a86e0"/>
 </g>
 <!-- explorer -->
 <g>
  <path d="M408.6 694.2h7l1.6 1.8h11.2v12.6h-19.8z" fill="#f4d77c"/>
  <rect x="408.6" y="697.4" width="19.8" height="11.2" fill="#f8e08c"/>
  <path d="M412 708.8v-5.2l2-2h8l2 2v5.2h-3.4v-3h-5.2v3z" fill="#36a8c8"/>
 </g>
 <!-- excel -->
 <g>
  <path d="M457 691.5l13-1.5 4.8 3.2v15.5l-17.8 1.2z" fill="#cfe6c0"/>
  <path d="M453.9 693.2l14-1.6v17.6l-14-1.6z" fill="#b8dca4"/>
  <path d="M457 696.2l2.6 0 2 3 2.2-3.2 2.8-.1-3.6 5 3.8 5.2-2.9-.1-2.3-3.4-2.2 3.2-2.6-.1 3.5-4.8z" fill="#1f6a2c"/>
  <path d="M468.6 695.5h4.6v2.6h-4.6zM468.6 699.6h4.6v2.6h-4.6zM468.6 703.7h4.6v2.6h-4.6z" fill="#5c9e58"/>
 </g>
 <!-- word -->
 <g>
  <path d="M502 691.4l13-1.4 5.6 3.4v15l-18.6 1.4z" fill="#e8ecf6"/>
  <path d="M499 693l13.6-1.6v17.8l-13.6-1.6z" fill="#8ea4d8"/>
  <path d="M506.5 694.4h11.5v5.2h-11.5z" fill="#f4f6fb"/>
  <path d="M507.4 695l1.4 0 .9 3 1-3h1.2l1 3 .9-3h1.4l-1.6 4.4h-1.3l-1-2.9-1 2.9h-1.3z" fill="#2c4a9c"/>
  <path d="M504 702h14v1.2h-14zM504 704.4h14v1.2h-14zM504 706.8h14v1.2h-14z" fill="#6c86c8"/>
 </g>
 <!-- orange recorder -->
 <g>
  <rect x="545" y="690" width="23" height="22.5" fill="#e2703a"/>
  <circle cx="556.5" cy="700.4" r="4.6" fill="#fbe8d4"/>
  <path d="M548.4 696.4v-3h3M564.6 696.4v-3h-3M548.4 705.4v3h3M564.6 705.4v3h-3" fill="none" stroke="#f6a070" stroke-width="1.3"/>
 </g>
 <!-- vesta -->
 <g fill="none" stroke="#f08a5c" stroke-width="2">
  <path d="M601.6 702.6L601.6 693.6M601.6 702.6L594.6 707M601.6 702.6L608.8 702.4M601.6 702.6L603 708.6" stroke="#4a78c8" stroke-width="1.6"/>
  <circle cx="601.6" cy="693.2" r="2.6" fill="#fde4d0"/>
  <circle cx="594.4" cy="707" r="2.4" fill="#fde4d0"/>
  <circle cx="609.2" cy="702.4" r="2.6" fill="#fde4d0"/>
  <circle cx="603.2" cy="708.8" r="2.4" fill="#fde4d0"/>
 </g>
 <!-- tray -->
 <g fill="none" stroke="#fff" stroke-width="1.5">
  <path d="M1039 703.8l5.5-5.4 5.5 5.4"/>
  <path d="M1064.4 698.6h9.6v7.2h-12.2M1074.4 700.8v2.8"/>
  <path d="M1061.4 697.2v3.4M1063 696v1.6M1059.8 696v1.6M1059.2 697.6h4.4v1.6a2.2 2.2 0 0 1-4.4 0zM1061.4 700.8v2.8"/>
  <path d="M1104.6 699.4h2.2l3.4-3.2v11l-3.4-3.2h-2.2z"/>
  <path d="M1112.8 699l4.6 4.6M1117.4 699l-4.6 4.6" stroke-width="1.3"/>
 </g>
 <rect x="1064.6" y="700.6" width="4.4" height="4.6" fill="#fff"/>
 <g fill="none" stroke="#9a9a9a" stroke-width="1.5">
  <path d="M1088 699.5a10 10 0 0 1 8-3.2M1090.4 702.4a6.6 6.6 0 0 1 5.6-2.6M1092.6 705a3.6 3.6 0 0 1 3.4-1.8"/>
 </g>
 <rect x="1093.6" y="705.2" width="2.6" height="2.6" fill="#9a9a9a"/>
 <circle cx="1086" cy="704.6" r="3.8" fill="#d8323c"/>
 <path d="M1084.2 702.8l3.6 3.6M1087.8 702.8l-3.6 3.6" stroke="#ffd8d8" stroke-width="1.2" fill="none"/>
 <path d="M1127 694.3h15v11.6h-5l-2.6 3-2.6-3h-4.8z" fill="#fff"/>
 <path d="M1129.6 697.4h10M1129.6 700h10M1129.6 702.6h6" stroke="#0a0d12" stroke-width="1.1" fill="none"/>
</svg>
<span class="t" id="t47" style="left:-8.60px;top:695.03px;font-size:14.5px;color:#a9a9a9;transform:scaleX(0.9571);">Search the web and Windows</span>
<!-- pointer highlight -->
<div class="a" style="left:2.3px;top:80.6px;width:35.6px;height:35.6px;border-radius:50%;background:radial-gradient(circle,rgba(238,238,30,0.68) 0,rgba(240,240,40,0.64) 60%,rgba(242,242,60,0.36) 82%,rgba(242,242,80,0) 100%);"></div>
<svg style="left:19px;top:95px" width="16" height="24" viewBox="0 0 16 24"><path d="M1 1.2 L1 16.8 L4.6 13.4 L7.4 19.8 L9.8 18.7 L7.1 12.5 L11.8 12.5 Z" fill="#fff" stroke="#1a1a00" stroke-width="1.1" stroke-linejoin="round"/></svg>
</body></html>
